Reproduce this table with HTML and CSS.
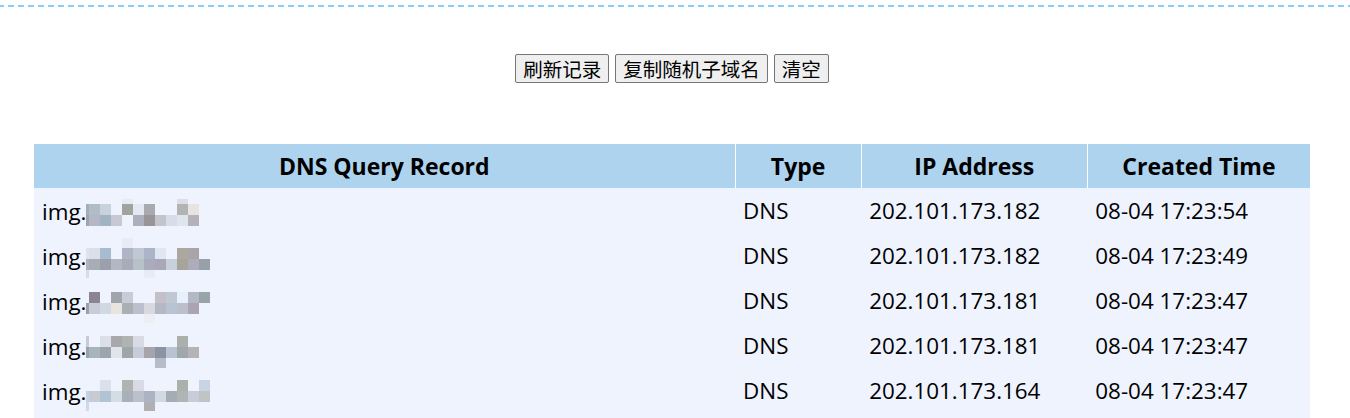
FILE: index.html
```html
<!DOCTYPE html>
<html lang="zh-CN">
<head>
<meta charset="utf-8">
<title>DNS Query Record</title>
<link rel="stylesheet" href="styles.css">
</head>
<body>
<div class="page">
  <div class="topline"></div>
  <div class="actions">
    <button class="btn" type="button">刷新记录</button>
    <button class="btn" type="button">复制随机子域名</button>
    <button class="btn" type="button">清空</button>
  </div>
  <table class="records">
    <thead>
      <tr>
        <th class="c-domain">DNS Query Record</th>
        <th class="c-type">Type</th>
        <th class="c-ip">IP Address</th>
        <th class="c-time">Created Time</th>
      </tr>
    </thead>
    <tbody>
      <tr>
        <td><div class="domain"><span>img.</span><svg class="mosaic" width="124" height="45" viewBox="0 0 124 45">
          <rect x="36" y="11" width="11" height="5" fill="#e8eaf3"/><rect x="91" y="11" width="11" height="5" fill="#dcdde6"/>
          <rect x="0" y="16" width="3" height="11" fill="#a8aab8"/><rect x="3" y="16" width="11" height="11" fill="#b0bcc8"/><rect x="14" y="16" width="11" height="11" fill="#c8d2dc"/><rect x="36" y="16" width="11" height="11" fill="#a0a49c"/><rect x="47" y="16" width="11" height="11" fill="#e4e8f2"/><rect x="58" y="16" width="11" height="11" fill="#a8aab0"/><rect x="91" y="16" width="11" height="11" fill="#b0b4b4"/><rect x="102" y="16" width="11" height="11" fill="#e8e4e4"/>
          <rect x="0" y="27" width="3" height="11" fill="#a0a4b0"/><rect x="3" y="27" width="11" height="11" fill="#b4b8c4"/><rect x="14" y="27" width="11" height="11" fill="#a0b4c4"/><rect x="25" y="27" width="11" height="11" fill="#c8c8d4"/><rect x="47" y="27" width="11" height="11" fill="#acb0bc"/><rect x="58" y="27" width="11" height="11" fill="#989498"/><rect x="69" y="27" width="11" height="11" fill="#c4c4cc"/><rect x="80" y="27" width="11" height="11" fill="#d8dce8"/><rect x="91" y="27" width="11" height="11" fill="#e0e4ec"/><rect x="102" y="27" width="11" height="11" fill="#b4b4b8"/>
        </svg></div></td>
        <td>DNS</td><td>202.101.173.182</td><td>08-04 17:23:54</td>
      </tr>
      <tr>
        <td><div class="domain"><span>img.</span><svg class="mosaic" width="124" height="45" viewBox="0 0 124 45">
          <rect x="36" y="5" width="11" height="10" fill="#e8ecf6"/>
          <rect x="0" y="15" width="3" height="11" fill="#e0e2ec"/><rect x="3" y="15" width="11" height="11" fill="#dcdeea"/><rect x="14" y="15" width="11" height="11" fill="#a8bcd0"/><rect x="36" y="15" width="11" height="11" fill="#b0b4c4"/><rect x="47" y="15" width="11" height="11" fill="#c0c8d4"/><rect x="58" y="15" width="11" height="11" fill="#acb4c8"/><rect x="69" y="15" width="11" height="11" fill="#e0e6f2"/><rect x="91" y="15" width="11" height="11" fill="#aca8a0"/><rect x="102" y="15" width="11" height="11" fill="#a8a4a8"/>
          <rect x="0" y="26" width="3" height="11" fill="#b0b4c0"/><rect x="3" y="26" width="11" height="11" fill="#a8acb4"/><rect x="14" y="26" width="11" height="11" fill="#9ca0ac"/><rect x="25" y="26" width="11" height="11" fill="#b4b6c4"/><rect x="36" y="26" width="11" height="11" fill="#a8acb8"/><rect x="47" y="26" width="11" height="11" fill="#b8c0c8"/><rect x="58" y="26" width="11" height="11" fill="#a8acbc"/><rect x="69" y="26" width="11" height="11" fill="#a8a8b8"/><rect x="80" y="26" width="11" height="11" fill="#c8d0dc"/><rect x="91" y="26" width="11" height="11" fill="#a8a49c"/><rect x="102" y="26" width="11" height="11" fill="#acacbc"/><rect x="113" y="26" width="11" height="11" fill="#98a0a8"/>
          <rect x="0" y="37" width="3" height="8" fill="#d4dce8"/><rect x="58" y="37" width="11" height="8" fill="#e8ecf6"/>
        </svg></div></td>
        <td>DNS</td><td>202.101.173.182</td><td>08-04 17:23:49</td>
      </tr>
      <tr>
        <td><div class="domain"><span>img.</span><svg class="mosaic" width="124" height="45" viewBox="0 0 124 45">
          <rect x="3" y="14" width="11" height="11" fill="#8c8494"/><rect x="25" y="14" width="11" height="11" fill="#a0a4ac"/><rect x="36" y="14" width="11" height="11" fill="#c8ccd8"/><rect x="69" y="14" width="11" height="11" fill="#c4c0c8"/><rect x="80" y="14" width="11" height="11" fill="#c0c8d4"/><rect x="91" y="14" width="11" height="11" fill="#e8f0fe"/><rect x="102" y="14" width="11" height="11" fill="#b4b8c4"/><rect x="113" y="14" width="11" height="11" fill="#98a4a8"/>
          <rect x="0" y="25" width="3" height="11" fill="#9ca0a8"/><rect x="3" y="25" width="11" height="11" fill="#c8ccd8"/><rect x="14" y="25" width="11" height="11" fill="#d0d8e4"/><rect x="25" y="25" width="11" height="11" fill="#e8e4e0"/><rect x="36" y="25" width="11" height="11" fill="#a8b0b4"/><rect x="47" y="25" width="11" height="11" fill="#bcc0cc"/><rect x="58" y="25" width="11" height="11" fill="#d8d8e0"/><rect x="69" y="25" width="11" height="11" fill="#b4b8c4"/><rect x="80" y="25" width="11" height="11" fill="#b8c4d4"/><rect x="91" y="25" width="11" height="11" fill="#bcc0cc"/><rect x="102" y="25" width="11" height="11" fill="#aca4b4"/>
          <rect x="58" y="36" width="11" height="9" fill="#eceef4"/>
        </svg></div></td>
        <td>DNS</td><td>202.101.173.181</td><td>08-04 17:23:47</td>
      </tr>
      <tr>
        <td><div class="domain"><span>img.</span><svg class="mosaic" width="124" height="45" viewBox="0 0 124 45">
          <rect x="0" y="13" width="3" height="11" fill="#c8cad8"/><rect x="14" y="13" width="11" height="11" fill="#dcdfea"/><rect x="25" y="13" width="11" height="11" fill="#a8a8ac"/><rect x="36" y="13" width="11" height="11" fill="#b0b4b0"/><rect x="47" y="13" width="11" height="11" fill="#d8dae6"/><rect x="91" y="13" width="11" height="11" fill="#acb0ac"/>
          <rect x="0" y="24" width="3" height="11" fill="#9ca0a8"/><rect x="3" y="24" width="11" height="11" fill="#a8b4bc"/><rect x="14" y="24" width="11" height="11" fill="#9ca4ac"/><rect x="25" y="24" width="11" height="11" fill="#e0e4ec"/><rect x="36" y="24" width="11" height="11" fill="#9ca8a8"/><rect x="47" y="24" width="11" height="11" fill="#c8ccd8"/><rect x="58" y="24" width="11" height="11" fill="#a8a4ac"/><rect x="69" y="24" width="11" height="11" fill="#8c94a4"/><rect x="80" y="24" width="11" height="11" fill="#b8c4d4"/><rect x="91" y="24" width="11" height="11" fill="#a0a8ac"/><rect x="102" y="24" width="11" height="11" fill="#b4b4b8"/>
          <rect x="69" y="35" width="11" height="10" fill="#b8bcc8"/>
        </svg></div></td>
        <td>DNS</td><td>202.101.173.181</td><td>08-04 17:23:47</td>
      </tr>
      <tr>
        <td><div class="domain"><span>img.</span><svg class="mosaic" width="124" height="45" viewBox="0 0 124 45">
          <rect x="14" y="12" width="11" height="11" fill="#dce0ea"/><rect x="36" y="12" width="11" height="11" fill="#b0b4b0"/><rect x="47" y="12" width="11" height="11" fill="#d8dae6"/><rect x="91" y="12" width="11" height="11" fill="#acb0ac"/><rect x="113" y="12" width="11" height="11" fill="#c8d4e4"/>
          <rect x="0" y="23" width="3" height="11" fill="#c8d0e4"/><rect x="3" y="23" width="11" height="11" fill="#c8cad4"/><rect x="14" y="23" width="11" height="11" fill="#b0c4d4"/><rect x="25" y="23" width="11" height="11" fill="#d4dce4"/><rect x="36" y="23" width="11" height="11" fill="#a8b0bc"/><rect x="47" y="23" width="11" height="11" fill="#bcc0cc"/><rect x="58" y="23" width="11" height="11" fill="#acb4c4"/><rect x="69" y="23" width="11" height="11" fill="#d4d8e2"/><rect x="80" y="23" width="11" height="11" fill="#a4acb4"/><rect x="91" y="23" width="11" height="11" fill="#b0b4b4"/><rect x="102" y="23" width="11" height="11" fill="#c8ccd8"/><rect x="113" y="23" width="11" height="11" fill="#c0c4c4"/>
          <rect x="0" y="34" width="3" height="9" fill="#d0d8ec"/><rect x="58" y="34" width="11" height="9" fill="#b0b0b4"/>
        </svg></div></td>
        <td>DNS</td><td>202.101.173.164</td><td>08-04 17:23:47</td>
      </tr>
      <tr class="more">
        <td></td><td></td><td></td><td></td>
      </tr>
    </tbody>
  </table>
</div>
</body>
</html>
```

FILE: styles.css
```css
html, body {
  margin: 0;
  padding: 0;
  background: #ffffff;
}

body {
  font-family: "Open Sans", "Noto Sans", "Liberation Sans", sans-serif;
  color: #000;
}

.page {
  width: 1344px;
  padding-top: 5px;
}

.topline {
  height: 2px;
  width: 1350px;
  background: repeating-linear-gradient(90deg, #87cefa 0 6px, transparent 6px 10px);
  background-position: -2px 0;
}

.actions {
  display: flex;
  justify-content: center;
  gap: 6px;
  margin-top: 47px;
}

.btn {
  font-family: "Noto Sans CJK SC", "Microsoft YaHei", sans-serif;
  font-size: 19.5px;
  line-height: 25px;
  height: 29px;
  padding: 1px 7px;
  background: #efefef;
  color: #000;
  border: 1px solid #767676;
  border-radius: 2px;
}

.records {
  margin-top: 61px;
  margin-left: 34px;
  width: 1276px;
  border-collapse: collapse;
  table-layout: fixed;
  font-size: 22.4px;
}

.records th {
  background: #add3ee;
  height: 44px;
  padding: 0;
  font-size: 23px;
  font-weight: 700;
  text-align: center;
  border-right: 1px solid #ffffff;
}

.records th:last-child {
  border-right: none;
}

.c-domain { width: 700px; }
.c-type { width: 125px; }
.c-ip { width: 225px; }
.c-time { width: 222px; }

.records td {
  background: #eef3fe;
  height: 45px;
  padding: 0 8px;
  text-align: left;
  white-space: nowrap;
}

.domain {
  display: flex;
  align-items: center;
  height: 45px;
  padding-top: 2px;
  box-sizing: border-box;
}

.mosaic {
  display: block;
  flex: none;
  margin-top: -2px;
}
```
